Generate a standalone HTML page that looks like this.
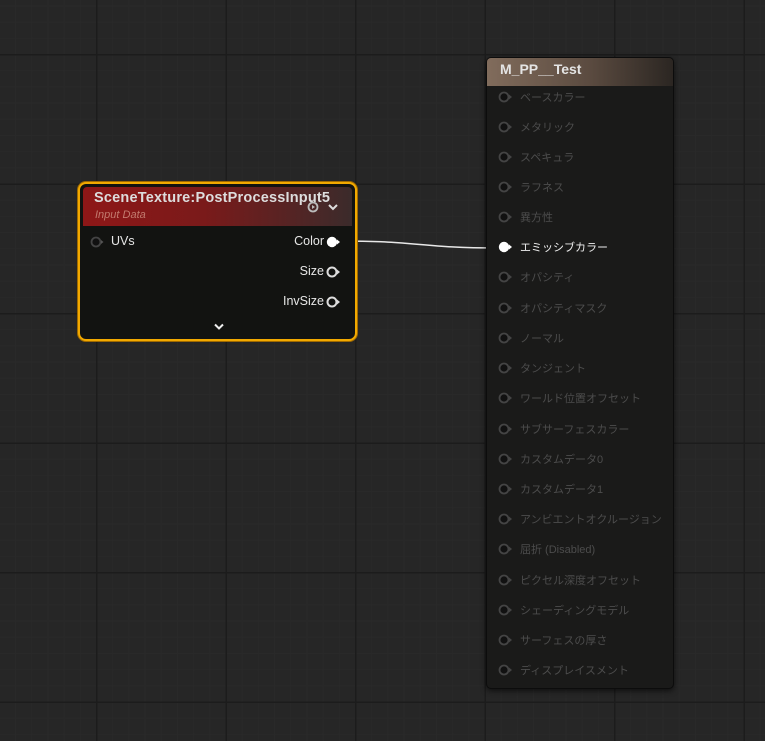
<!DOCTYPE html>
<html><head><meta charset="utf-8"><style>
*{margin:0;padding:0;box-sizing:border-box}
body{width:765px;height:741px;overflow:hidden;position:relative;background:#262626;font-family:"Liberation Sans","Noto Sans CJK JP",sans-serif;
background-image:
linear-gradient(to right,#1c1c1c 0,#1c1c1c 1.5px,transparent 1.5px),
linear-gradient(to bottom,#1c1c1c 0,#1c1c1c 1.5px,transparent 1.5px),
linear-gradient(to right,#292929 0,#292929 1px,transparent 1px),
linear-gradient(to bottom,#292929 0,#292929 1px,transparent 1px);
background-size:129.5px 129.5px,129.5px 129.5px,16.19px 16.19px,16.19px 16.19px;
background-position:96px 0,0 54px,96px 0,0 54px;}
.abs{position:absolute}
.n1{left:78px;top:182px;width:279px;height:159px;border:2.5px solid #f2a900;border-radius:8px;background:#121311;box-shadow:0 0 0 1px #a06a00}
.h1{position:absolute;left:3px;top:3px;right:3px;height:39px;border-radius:4px 4px 0 0;background:linear-gradient(to right,#8e1717 0%,#7a1a1a 45%,#3b2b2b 100%)}
.t1{position:absolute;left:11px;top:3px;color:#ddd;font-weight:bold;font-size:14.5px;letter-spacing:0.2px;white-space:nowrap}
.s1{position:absolute;left:12px;top:22px;color:#c27a6e;font-style:italic;font-size:11px}
.lbl{position:absolute;color:#e6e6e6;font-size:12.5px}
.n2{left:486px;top:57px;width:188px;height:632px;background:#1a1a19;border:1px solid #0c0c0c;border-radius:5px;box-shadow:0 2px 6px rgba(0,0,0,.6)}
.h2{position:absolute;left:0;top:0;right:0;height:28px;border-radius:4px 4px 0 0;background:linear-gradient(to right,#816c5c 0%,#5b4b40 55%,#2b2622 100%)}
.t2{position:absolute;left:13px;top:3px;color:#e4e4e4;font-weight:bold;font-size:14px}
.row{position:absolute;left:11px;height:16px;font-size:11px;color:#4c4c4c;white-space:nowrap}
.row svg{position:absolute;left:0;top:2px}
.row span{position:absolute;left:22px;top:0}
</style></head><body>
<svg class="abs" style="left:0;top:0" width="765" height="741"><path d="M341 241 C420 241,420 248,498 248" stroke="#e8e8e8" stroke-width="1.5" fill="none"/></svg>

<div class="abs n1">
 <div class="h1"><div class="t1">SceneTexture:PostProcessInput5</div><div class="s1">Input Data</div>
  <svg style="position:absolute;left:224px;top:13px" width="36" height="14"><circle cx="6" cy="7" r="4.5" fill="none" stroke="#bbb" stroke-width="1.8"/><path d="M5 5 L8 7 L5 9Z" fill="#bbb"/><path d="M22 5 L26 9 L30 5" stroke="#ddd" stroke-width="2" fill="none"/></svg>
 </div>
 <svg class="abs" style="left:10px;top:52px" width="16" height="12"><circle cx="6" cy="6" r="4.5" fill="#111" stroke="#444" stroke-width="1.8"/><path d="M11 4 L13.5 6 L11 8Z" fill="#555"/></svg>
 <div class="lbl" style="left:31px;top:50px">UVs</div>
 <div class="lbl" style="right:31px;top:50px">Color</div>
 <svg class="abs" style="left:246px;top:52px" width="16" height="12"><circle cx="6" cy="6" r="5.2" fill="#fff"/><path d="M11 3.5 L14 6 L11 8.5Z" fill="#fff"/></svg>
 <div class="lbl" style="right:31px;top:80px">Size</div>
 <svg class="abs" style="left:246px;top:82px" width="16" height="12"><circle cx="6" cy="6" r="4.5" fill="none" stroke="#ddd" stroke-width="2"/><path d="M11 3.5 L14 6 L11 8.5Z" fill="#ddd"/></svg>
 <div class="lbl" style="right:31px;top:110px">InvSize</div>
 <svg class="abs" style="left:246px;top:112px" width="16" height="12"><circle cx="6" cy="6" r="4.5" fill="none" stroke="#ddd" stroke-width="2"/><path d="M11 3.5 L14 6 L11 8.5Z" fill="#ddd"/></svg>
 <svg class="abs" style="left:133px;top:139px" width="12" height="8"><path d="M2 1.5 L6 5.5 L10 1.5" stroke="#eee" stroke-width="2" fill="none"/></svg>
</div>

<div class="abs n2">
 <div class="h2"><div class="t2">M_PP__Test</div></div>
 <div class="row" style="top:31px"><svg width="16" height="12"><circle cx="6" cy="6" r="4.5" fill="#111" stroke="#444" stroke-width="1.8"/><path d="M11 3.5 L14 6 L11 8.5Z" fill="#444"/></svg><span>ベースカラー</span></div>
 <div class="row" style="top:61px"><svg width="16" height="12"><circle cx="6" cy="6" r="4.5" fill="#111" stroke="#444" stroke-width="1.8"/><path d="M11 3.5 L14 6 L11 8.5Z" fill="#444"/></svg><span>メタリック</span></div>
 <div class="row" style="top:91px"><svg width="16" height="12"><circle cx="6" cy="6" r="4.5" fill="#111" stroke="#444" stroke-width="1.8"/><path d="M11 3.5 L14 6 L11 8.5Z" fill="#444"/></svg><span>スペキュラ</span></div>
 <div class="row" style="top:121px"><svg width="16" height="12"><circle cx="6" cy="6" r="4.5" fill="#111" stroke="#444" stroke-width="1.8"/><path d="M11 3.5 L14 6 L11 8.5Z" fill="#444"/></svg><span>ラフネス</span></div>
 <div class="row" style="top:151px"><svg width="16" height="12"><circle cx="6" cy="6" r="4.5" fill="#111" stroke="#444" stroke-width="1.8"/><path d="M11 3.5 L14 6 L11 8.5Z" fill="#444"/></svg><span>異方性</span></div>
 <div class="row" style="top:181px;color:#eee"><svg width="16" height="12"><circle cx="6" cy="6" r="5.2" fill="#fff"/><path d="M11 3.5 L14 6 L11 8.5Z" fill="#fff"/></svg><span>エミッシブカラー</span></div>
 <div class="row" style="top:211px"><svg width="16" height="12"><circle cx="6" cy="6" r="4.5" fill="#111" stroke="#444" stroke-width="1.8"/><path d="M11 3.5 L14 6 L11 8.5Z" fill="#444"/></svg><span>オパシティ</span></div>
 <div class="row" style="top:242px"><svg width="16" height="12"><circle cx="6" cy="6" r="4.5" fill="#111" stroke="#444" stroke-width="1.8"/><path d="M11 3.5 L14 6 L11 8.5Z" fill="#444"/></svg><span>オパシティマスク</span></div>
 <div class="row" style="top:272px"><svg width="16" height="12"><circle cx="6" cy="6" r="4.5" fill="#111" stroke="#444" stroke-width="1.8"/><path d="M11 3.5 L14 6 L11 8.5Z" fill="#444"/></svg><span>ノーマル</span></div>
 <div class="row" style="top:302px"><svg width="16" height="12"><circle cx="6" cy="6" r="4.5" fill="#111" stroke="#444" stroke-width="1.8"/><path d="M11 3.5 L14 6 L11 8.5Z" fill="#444"/></svg><span>タンジェント</span></div>
 <div class="row" style="top:332px"><svg width="16" height="12"><circle cx="6" cy="6" r="4.5" fill="#111" stroke="#444" stroke-width="1.8"/><path d="M11 3.5 L14 6 L11 8.5Z" fill="#444"/></svg><span>ワールド位置オフセット</span></div>
 <div class="row" style="top:363px"><svg width="16" height="12"><circle cx="6" cy="6" r="4.5" fill="#111" stroke="#444" stroke-width="1.8"/><path d="M11 3.5 L14 6 L11 8.5Z" fill="#444"/></svg><span>サブサーフェスカラー</span></div>
 <div class="row" style="top:393px"><svg width="16" height="12"><circle cx="6" cy="6" r="4.5" fill="#111" stroke="#444" stroke-width="1.8"/><path d="M11 3.5 L14 6 L11 8.5Z" fill="#444"/></svg><span>カスタムデータ0</span></div>
 <div class="row" style="top:423px"><svg width="16" height="12"><circle cx="6" cy="6" r="4.5" fill="#111" stroke="#444" stroke-width="1.8"/><path d="M11 3.5 L14 6 L11 8.5Z" fill="#444"/></svg><span>カスタムデータ1</span></div>
 <div class="row" style="top:453px"><svg width="16" height="12"><circle cx="6" cy="6" r="4.5" fill="#111" stroke="#444" stroke-width="1.8"/><path d="M11 3.5 L14 6 L11 8.5Z" fill="#444"/></svg><span>アンビエントオクルージョン</span></div>
 <div class="row" style="top:483px"><svg width="16" height="12"><circle cx="6" cy="6" r="4.5" fill="#111" stroke="#444" stroke-width="1.8"/><path d="M11 3.5 L14 6 L11 8.5Z" fill="#444"/></svg><span>屈折 (Disabled)</span></div>
 <div class="row" style="top:514px"><svg width="16" height="12"><circle cx="6" cy="6" r="4.5" fill="#111" stroke="#444" stroke-width="1.8"/><path d="M11 3.5 L14 6 L11 8.5Z" fill="#444"/></svg><span>ピクセル深度オフセット</span></div>
 <div class="row" style="top:544px"><svg width="16" height="12"><circle cx="6" cy="6" r="4.5" fill="#111" stroke="#444" stroke-width="1.8"/><path d="M11 3.5 L14 6 L11 8.5Z" fill="#444"/></svg><span>シェーディングモデル</span></div>
 <div class="row" style="top:574px"><svg width="16" height="12"><circle cx="6" cy="6" r="4.5" fill="#111" stroke="#444" stroke-width="1.8"/><path d="M11 3.5 L14 6 L11 8.5Z" fill="#444"/></svg><span>サーフェスの厚さ</span></div>
 <div class="row" style="top:604px"><svg width="16" height="12"><circle cx="6" cy="6" r="4.5" fill="#111" stroke="#444" stroke-width="1.8"/><path d="M11 3.5 L14 6 L11 8.5Z" fill="#444"/></svg><span>ディスプレイスメント</span></div>
</div>
</body></html>
